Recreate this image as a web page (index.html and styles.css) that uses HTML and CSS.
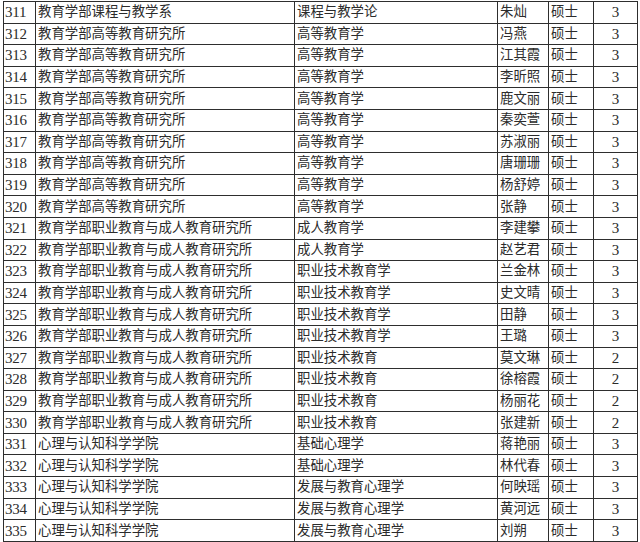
FILE: index.html
```html
<!DOCTYPE html>
<html lang="zh">
<head>
<meta charset="utf-8">
<link rel="stylesheet" href="styles.css">
</head>
<body>
<table class="list">
<colgroup>
<col class="c-no"><col class="c-dept"><col class="c-major"><col class="c-name"><col class="c-deg"><col class="c-num">
</colgroup>
<tbody>
<tr><td class="no">311</td><td>教育学部课程与教学系</td><td>课程与教学论</td><td>朱灿</td><td>硕士</td><td class="num">3</td></tr>
<tr><td class="no">312</td><td>教育学部高等教育研究所</td><td>高等教育学</td><td>冯燕</td><td>硕士</td><td class="num">3</td></tr>
<tr><td class="no">313</td><td>教育学部高等教育研究所</td><td>高等教育学</td><td>江其霞</td><td>硕士</td><td class="num">3</td></tr>
<tr><td class="no">314</td><td>教育学部高等教育研究所</td><td>高等教育学</td><td>李昕照</td><td>硕士</td><td class="num">3</td></tr>
<tr><td class="no">315</td><td>教育学部高等教育研究所</td><td>高等教育学</td><td>鹿文丽</td><td>硕士</td><td class="num">3</td></tr>
<tr><td class="no">316</td><td>教育学部高等教育研究所</td><td>高等教育学</td><td>秦奕萱</td><td>硕士</td><td class="num">3</td></tr>
<tr><td class="no">317</td><td>教育学部高等教育研究所</td><td>高等教育学</td><td>苏淑丽</td><td>硕士</td><td class="num">3</td></tr>
<tr><td class="no">318</td><td>教育学部高等教育研究所</td><td>高等教育学</td><td>唐珊珊</td><td>硕士</td><td class="num">3</td></tr>
<tr><td class="no">319</td><td>教育学部高等教育研究所</td><td>高等教育学</td><td>杨舒婷</td><td>硕士</td><td class="num">3</td></tr>
<tr><td class="no">320</td><td>教育学部高等教育研究所</td><td>高等教育学</td><td>张静</td><td>硕士</td><td class="num">3</td></tr>
<tr><td class="no">321</td><td>教育学部职业教育与成人教育研究所</td><td>成人教育学</td><td>李建攀</td><td>硕士</td><td class="num">3</td></tr>
<tr><td class="no">322</td><td>教育学部职业教育与成人教育研究所</td><td>成人教育学</td><td>赵艺君</td><td>硕士</td><td class="num">3</td></tr>
<tr><td class="no">323</td><td>教育学部职业教育与成人教育研究所</td><td>职业技术教育学</td><td>兰金林</td><td>硕士</td><td class="num">3</td></tr>
<tr><td class="no">324</td><td>教育学部职业教育与成人教育研究所</td><td>职业技术教育学</td><td>史文晴</td><td>硕士</td><td class="num">3</td></tr>
<tr><td class="no">325</td><td>教育学部职业教育与成人教育研究所</td><td>职业技术教育学</td><td>田静</td><td>硕士</td><td class="num">3</td></tr>
<tr><td class="no">326</td><td>教育学部职业教育与成人教育研究所</td><td>职业技术教育学</td><td>王璐</td><td>硕士</td><td class="num">3</td></tr>
<tr><td class="no">327</td><td>教育学部职业教育与成人教育研究所</td><td>职业技术教育</td><td>莫文琳</td><td>硕士</td><td class="num">2</td></tr>
<tr><td class="no">328</td><td>教育学部职业教育与成人教育研究所</td><td>职业技术教育</td><td>徐榕霞</td><td>硕士</td><td class="num">2</td></tr>
<tr><td class="no">329</td><td>教育学部职业教育与成人教育研究所</td><td>职业技术教育</td><td>杨丽花</td><td>硕士</td><td class="num">2</td></tr>
<tr><td class="no">330</td><td>教育学部职业教育与成人教育研究所</td><td>职业技术教育</td><td>张建新</td><td>硕士</td><td class="num">2</td></tr>
<tr><td class="no">331</td><td>心理与认知科学学院</td><td>基础心理学</td><td>蒋艳丽</td><td>硕士</td><td class="num">3</td></tr>
<tr><td class="no">332</td><td>心理与认知科学学院</td><td>基础心理学</td><td>林代春</td><td>硕士</td><td class="num">3</td></tr>
<tr><td class="no">333</td><td>心理与认知科学学院</td><td>发展与教育心理学</td><td>何映瑶</td><td>硕士</td><td class="num">3</td></tr>
<tr><td class="no">334</td><td>心理与认知科学学院</td><td>发展与教育心理学</td><td>黄河远</td><td>硕士</td><td class="num">3</td></tr>
<tr><td class="no">335</td><td>心理与认知科学学院</td><td>发展与教育心理学</td><td>刘朔</td><td>硕士</td><td class="num">3</td></tr>
<tr class="cut"><td class="no"></td><td></td><td></td><td></td><td></td><td class="num"></td></tr>
</tbody>
</table>
</body>
</html>
```
FILE: styles.css
```css
html, body {
  margin: 0;
  padding: 0;
  background: #ffffff;
  overflow: hidden;
}
body {
  padding: 1px 0 0 3px;
  font-family: "Liberation Serif", "Noto Sans CJK SC", serif;
  color: #2b2b2b;
}
.list {
  border-collapse: collapse;
  table-layout: fixed;
  width: 634px;
}
.c-no { width: 32px; }
.c-dept { width: 259px; }
.c-major { width: 203px; }
.c-name { width: 51px; }
.c-deg { width: 45px; }
.c-num { width: 44px; }
.list tr {
  height: 21.6px;
}
.list td {
  border: 1px solid #2e2e2e;
  padding: 0 0 0 2px;
  font-size: 13.4px;
  line-height: 18px;
  white-space: nowrap;
  overflow: hidden;
  vertical-align: middle;
}
.list td.no {
  font-size: 15px;
  padding-left: 1px;
  letter-spacing: -0.2px;
}
.list td.num {
  text-align: center;
  font-size: 15px;
  padding: 0;
}
.list tr.cut td {
  background: #f3f3f3;
}
```
